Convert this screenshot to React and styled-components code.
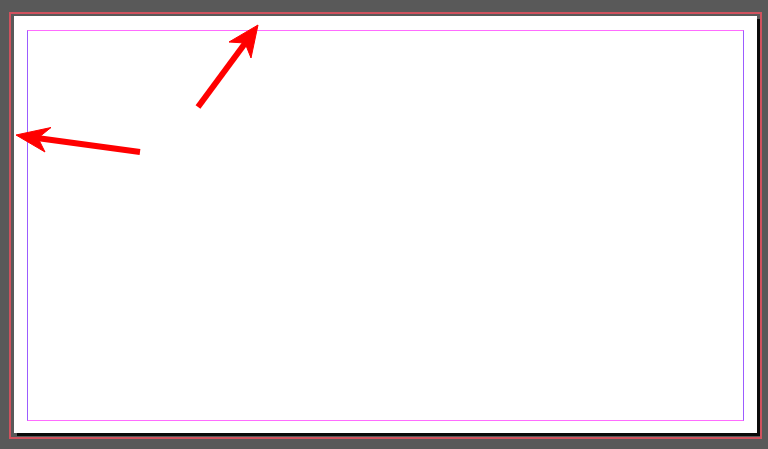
import React from 'react';
import styled, { createGlobalStyle } from 'styled-components';

const GlobalStyle = createGlobalStyle`
  html, body {
    margin: 0;
    padding: 0;
    background: #595959;
    font-family: "Liberation Sans", Arial, sans-serif;
  }
`;

const Pasteboard = styled.div`
  position: relative;
  width: 768px;
  height: 449px;
  background: #595959;
  padding: 12px 0 0 9px;
  box-sizing: border-box;
  overflow: hidden;
`;

const Bleed = styled.div`
  width: 753px;
  height: 427px;
  box-sizing: border-box;
  border: 2px solid #d0525e;
  padding: 2px 0 0 3px;
`;

const Page = styled.div`
  width: 743px;
  height: 417px;
  background: #ffffff;
  box-shadow: 3px 3px 0 #0a0a0a;
  box-sizing: border-box;
  padding: 14px 13px 12px 13px;
`;

const MarginGuide = styled.div`
  width: 100%;
  height: 100%;
  box-sizing: border-box;
  border-top: 1px solid #ff6cff;
  border-bottom: 1px solid #ff6cff;
  border-left: 1px solid #9b5cff;
  border-right: 1px solid #9b5cff;
`;

const Callouts = styled.svg`
  position: absolute;
  inset: 0;
  width: 768px;
  height: 449px;
  pointer-events: none;
`;

function Arrow({ tail, notch, head }) {
  return (
    <g fill="#ff0000" stroke="#ff0000">
      <line
        x1={tail[0]}
        y1={tail[1]}
        x2={notch[0]}
        y2={notch[1]}
        strokeWidth="6"
      />
      <polygon points={head.map((p) => p.join(',')).join(' ')} strokeWidth="1" strokeLinejoin="miter" />
    </g>
  );
}

export default function App() {
  return (
    <>
      <GlobalStyle />
      <Pasteboard>
        <Bleed>
          <Page>
            <MarginGuide />
          </Page>
        </Bleed>
        <Callouts viewBox="0 0 768 449">
          <Arrow
            tail={[198, 107]}
            notch={[246, 42]}
            head={[[258, 25], [229, 42], [245, 43], [251, 58]]}
          />
          <Arrow
            tail={[140, 152]}
            notch={[37, 138]}
            head={[[16, 135], [51, 127.5], [38, 138], [45, 152]]}
          />
        </Callouts>
      </Pasteboard>
    </>
  );
}
